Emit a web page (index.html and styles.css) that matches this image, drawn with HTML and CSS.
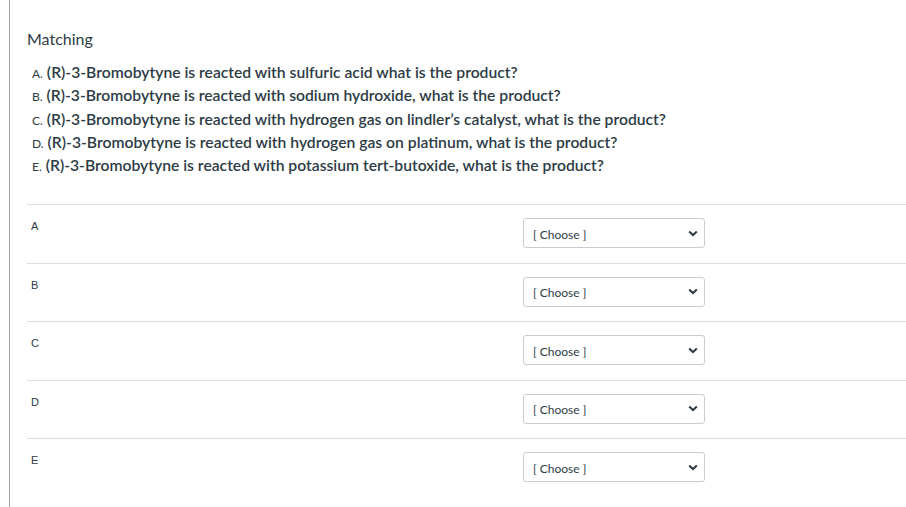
FILE: index.html
```html
<!DOCTYPE html>
<html>
<head>
<meta charset="utf-8">
<link rel="stylesheet" href="styles.css">
</head>
<body>
<div class="page">
  <div class="question">
    <h2 class="title">Matching</h2>
    <ol class="prompts">
      <li><span class="ltr">A.</span> (R)-3-Bromobytyne is reacted with sulfuric acid what is the product?</li>
      <li><span class="ltr">B.</span> (R)-3-Bromobytyne is reacted with sodium hydroxide, what is the product?</li>
      <li><span class="ltr">C.</span> (R)-3-Bromobytyne is reacted with hydrogen gas on lindler’s catalyst, what is the product?</li>
      <li><span class="ltr">D.</span> (R)-3-Bromobytyne is reacted with hydrogen gas on platinum, what is the product?</li>
      <li><span class="ltr">E.</span> (R)-3-Bromobytyne is reacted with potassium tert-butoxide, what is the product?</li>
    </ol>
    <div class="answers">
      <div class="row"><div class="label">A</div><div class="select"><span>[ Choose ]</span><svg class="chev" width="10" height="7" viewBox="0 0 10 7"><path d="M1.2 1.4 L5 5 L8.8 1.4" fill="none" stroke="#2d3b45" stroke-width="2"/></svg></div></div>
      <div class="row"><div class="label">B</div><div class="select"><span>[ Choose ]</span><svg class="chev" width="10" height="7" viewBox="0 0 10 7"><path d="M1.2 1.4 L5 5 L8.8 1.4" fill="none" stroke="#2d3b45" stroke-width="2"/></svg></div></div>
      <div class="row"><div class="label">C</div><div class="select"><span>[ Choose ]</span><svg class="chev" width="10" height="7" viewBox="0 0 10 7"><path d="M1.2 1.4 L5 5 L8.8 1.4" fill="none" stroke="#2d3b45" stroke-width="2"/></svg></div></div>
      <div class="row"><div class="label">D</div><div class="select"><span>[ Choose ]</span><svg class="chev" width="10" height="7" viewBox="0 0 10 7"><path d="M1.2 1.4 L5 5 L8.8 1.4" fill="none" stroke="#2d3b45" stroke-width="2"/></svg></div></div>
      <div class="row"><div class="label">E</div><div class="select"><span>[ Choose ]</span><svg class="chev" width="10" height="7" viewBox="0 0 10 7"><path d="M1.2 1.4 L5 5 L8.8 1.4" fill="none" stroke="#2d3b45" stroke-width="2"/></svg></div></div>
    </div>
  </div>
</div>
</body>
</html>
```
FILE: styles.css
```css
html, body {
  margin: 0;
  padding: 0;
  background: #fff;
}
body {
  font-family: Lato, "Noto Sans", sans-serif;
  color: #2d3b45;
  width: 906px;
  height: 507px;
  overflow: hidden;
}
.page {
  margin-left: 9px;
  border-left: 1px solid #a5a5a5;
  height: 507px;
  box-sizing: border-box;
}
.question {
  padding: 29px 0 0 17px;
}
.title {
  margin: 0;
  font-size: 16px;
  font-weight: 400;
  line-height: 20px;
  color: #2d3b45;
}
.prompts {
  list-style: none;
  margin: 12px 0 0 0;
  padding: 0 0 0 5px;
}
.prompts li {
  font-size: 15.7px;
  font-weight: 600;
  line-height: 23.3px;
  height: 23.3px;
  color: #2d3b45;
  white-space: nowrap;
}
.ltr {
  font-size: 12px;
  font-weight: 400;
  line-height: 1;
}
.answers {
  margin-top: 27px;
}
.row {
  display: flex;
  align-items: flex-start;
  border-top: 1px solid #dcdcdc;
  padding: 13px 0 14.5px 0;
  height: 30px;
}
.label {
  width: 496px;
  padding: 2px 0 0 4px;
  box-sizing: border-box;
  font-family: "Liberation Sans", Arial, sans-serif;
  font-size: 11px;
  line-height: 13px;
  color: #2d3b45;
}
.select {
  width: 182px;
  height: 30px;
  box-sizing: border-box;
  border: 1px solid #c7cdd1;
  border-radius: 3px;
  display: flex;
  align-items: center;
  justify-content: space-between;
  padding: 0 6px 0 9px;
  font-size: 12px;
  color: #2d3b45;
}
.select span {
  position: relative;
  top: 1px;
}
.chev {
  display: block;
}
```
